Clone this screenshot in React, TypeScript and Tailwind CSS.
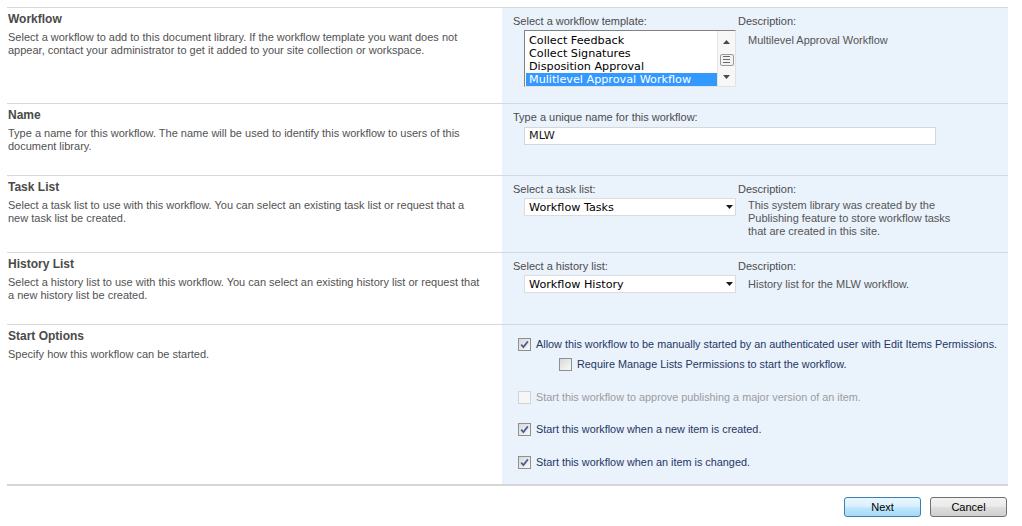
import React from "react";

function Check({ checked, disabled }: { checked?: boolean; disabled?: boolean }) {
  return (
    <span
      className={
        disabled
          ? "flex h-[13px] w-[13px] shrink-0 items-center justify-center border border-[#d2d2d2] bg-[#f6f6f6]"
          : "flex h-[13px] w-[13px] shrink-0 items-center justify-center border border-[#8e8f8f] bg-[linear-gradient(135deg,#d8d8d8,#f9f9f9)]"
      }
    >
      {checked && (
        <svg width="11" height="11" viewBox="0 0 11 11">
          <path d="M2.2 5.6 L4.4 8.1 L8.9 2.4" fill="none" stroke="#4b5d93" strokeWidth="1.7" />
        </svg>
      )}
    </span>
  );
}

function CheckRow({ checked, disabled, label }: { checked?: boolean; disabled?: boolean; label: string }) {
  return (
    <div
      className={
        disabled
          ? "flex h-[16px] items-center gap-[5px] text-[10.85px] text-[#9c9c9c]"
          : "flex h-[16px] items-center gap-[5px] text-[10.85px] text-[#1f3763]"
      }
    >
      <Check checked={checked} disabled={disabled} />
      <span className="whitespace-nowrap leading-[16px]">{label}</span>
    </div>
  );
}

function Row({
  hClass,
  title,
  desc,
  children,
}: {
  hClass: string;
  title: string;
  desc: React.ReactNode;
  children: React.ReactNode;
}) {
  return (
    <div className={"grid grid-cols-[495px_506px] border-t border-[#d8d8d8] " + hClass}>
      <div className="pl-[1px] pt-[4px]">
        <div className="text-[12px] font-bold leading-[14px] text-[#4a4a4a]">{title}</div>
        <div className="mt-[5px] whitespace-nowrap leading-[13px] text-[#525252]">{desc}</div>
      </div>
      <div className="bg-[#eaf2fc]">{children}</div>
    </div>
  );
}

function SelectBox({ value }: { value: string }) {
  return (
    <div className="ml-[11px] mt-[2px] flex h-[18px] w-[212px] items-center justify-between border border-[#dcdcdc] bg-white pl-[4px] pr-[2px] font-['DejaVu_Sans',Verdana,sans-serif] text-[11.2px] text-black">
      <span className="leading-[13px]">{value}</span>
      <svg width="7" height="4" viewBox="0 0 7 4">
        <path d="M0 0H7L3.5 4Z" fill="#1a1a1a" />
      </svg>
    </div>
  );
}

function ListBox() {
  const items = ["Collect Feedback", "Collect Signatures", "Disposition Approval", "Mulitlevel Approval Workflow"];
  return (
    <div className="ml-[11px] mt-[2px] flex h-[57px] w-[212px] border border-b-[#e2e2e2] border-l-[#828282] border-r-[#e2e2e2] border-t-[#828282] bg-white">
      <div className="flex-1 pl-[1px] pt-[3px] font-['DejaVu_Sans',Verdana,sans-serif] text-[11.2px] leading-[13px] text-black">
        {items.map((it, i) => (
          <div
            key={it}
            className={
              i === 3
                ? "h-[13px] whitespace-nowrap bg-[#3399ff] pl-[3px] text-white"
                : "h-[13px] whitespace-nowrap pl-[3px]"
            }
          >
            {it}
          </div>
        ))}
      </div>
      <div className="flex w-[18px] flex-col items-center justify-between border-l border-[#e4e4e4] bg-[#f7f7f7] pb-[7px] pt-[9px]">
        <svg width="7" height="4" viewBox="0 0 7 4">
          <path d="M0 4H7L3.5 0Z" fill="#4a4a4a" />
        </svg>
        <div className="flex h-[12px] w-[14px] flex-col items-center justify-center gap-[2px] rounded-[2px] border border-[#9a9a9a] bg-[#f2f2f2]">
          <span className="block h-px w-[7px] bg-[#6a6a6a]" />
          <span className="block h-px w-[7px] bg-[#6a6a6a]" />
          <span className="block h-px w-[7px] bg-[#6a6a6a]" />
        </div>
        <svg width="7" height="4" viewBox="0 0 7 4">
          <path d="M0 0H7L3.5 4Z" fill="#4a4a4a" />
        </svg>
      </div>
    </div>
  );
}

export default function App() {
  return (
    <div className="min-h-[526px] bg-white pl-[7px] pt-[7px] font-['Liberation_Sans',Arial,sans-serif] text-[11px]">
      <div className="w-[1001px]">
        <Row
          hClass="h-[96px]"
          title="Workflow"
          desc={
            <>
              Select a workflow to add to this document library. If the workflow template you want does not
              <br />
              appear, contact your administrator to get it added to your site collection or workspace.
            </>
          }
        >
          <div className="flex pl-[11px] pt-[7px]">
            <div className="w-[225px]">
              <div className="leading-[13px] text-[#4c4c4c]">Select a workflow template:</div>
              <ListBox />
            </div>
            <div>
              <div className="leading-[13px] text-[#4c4c4c]">Description:</div>
              <div className="ml-[10px] mt-[6px] leading-[13px] text-[#555]">Multilevel Approval Workflow</div>
            </div>
          </div>
        </Row>

        <Row
          hClass="h-[72px]"
          title="Name"
          desc={
            <>
              Type a name for this workflow. The name will be used to identify this workflow to users of this
              <br />
              document library.
            </>
          }
        >
          <div className="pl-[11px] pt-[7px]">
            <div className="leading-[13px] text-[#4c4c4c]">Type a unique name for this workflow:</div>
            <div className="ml-[11px] mt-[3px] flex h-[18px] w-[412px] items-center border border-[#d6d6d6] bg-white pl-[4px] font-['DejaVu_Sans',Verdana,sans-serif] text-[11.2px] text-[#1a1a1a]">
              MLW
            </div>
          </div>
        </Row>

        <Row
          hClass="h-[77px]"
          title="Task List"
          desc={
            <>
              Select a task list to use with this workflow. You can select an existing task list or request that a
              <br />
              new task list be created.
            </>
          }
        >
          <div className="flex pl-[11px] pt-[7px]">
            <div className="w-[225px]">
              <div className="leading-[13px] text-[#4c4c4c]">Select a task list:</div>
              <SelectBox value="Workflow Tasks" />
            </div>
            <div>
              <div className="leading-[13px] text-[#4c4c4c]">Description:</div>
              <div className="ml-[10px] mt-[3px] leading-[13px] text-[#555]">
                This system library was created by the
                <br />
                Publishing feature to store workflow tasks
                <br />
                that are created in this site.
              </div>
            </div>
          </div>
        </Row>

        <Row
          hClass="h-[72px]"
          title="History List"
          desc={
            <>
              Select a history list to use with this workflow. You can select an existing history list or request that
              <br />
              a new history list be created.
            </>
          }
        >
          <div className="flex pl-[11px] pt-[7px]">
            <div className="w-[225px]">
              <div className="leading-[13px] text-[#4c4c4c]">Select a history list:</div>
              <SelectBox value="Workflow History" />
            </div>
            <div>
              <div className="leading-[13px] text-[#4c4c4c]">Description:</div>
              <div className="ml-[10px] mt-[5px] leading-[13px] text-[#555]">History list for the MLW workflow.</div>
            </div>
          </div>
        </Row>

        <Row hClass="h-[160px]" title="Start Options" desc="Specify how this workflow can be started.">
          <div className="pl-[16px] pt-[11px]">
            <CheckRow checked label="Allow this workflow to be manually started by an authenticated user with Edit Items Permissions." />
            <div className="ml-[41px] mt-[4px]">
              <CheckRow label="Require Manage Lists Permissions to start the workflow." />
            </div>
            <div className="mt-[17px]">
              <CheckRow disabled label="Start this workflow to approve publishing a major version of an item." />
            </div>
            <div className="mt-[16px]">
              <CheckRow checked label="Start this workflow when a new item is created." />
            </div>
            <div className="mt-[17px]">
              <CheckRow checked label="Start this workflow when an item is changed." />
            </div>
          </div>
        </Row>

        <div className="h-[2px] bg-[#d6d6d6]" />

        <div className="mt-[11px] flex justify-end gap-[9px] pr-[1px]">
          <button className="h-[20px] w-[77px] rounded-[3px] border border-[#3c7fb1] bg-[linear-gradient(#eaf6fd,#d9f0fc_45%,#bee6fd_55%,#a7d9f5)] text-[11px] leading-[18px] text-black">
            Next
          </button>
          <button className="h-[20px] w-[77px] rounded-[3px] border border-[#707070] bg-[linear-gradient(#f2f2f2,#ebebeb_45%,#dddddd_55%,#cfcfcf)] text-[11px] leading-[18px] text-black">
            Cancel
          </button>
        </div>
      </div>
    </div>
  );
}
